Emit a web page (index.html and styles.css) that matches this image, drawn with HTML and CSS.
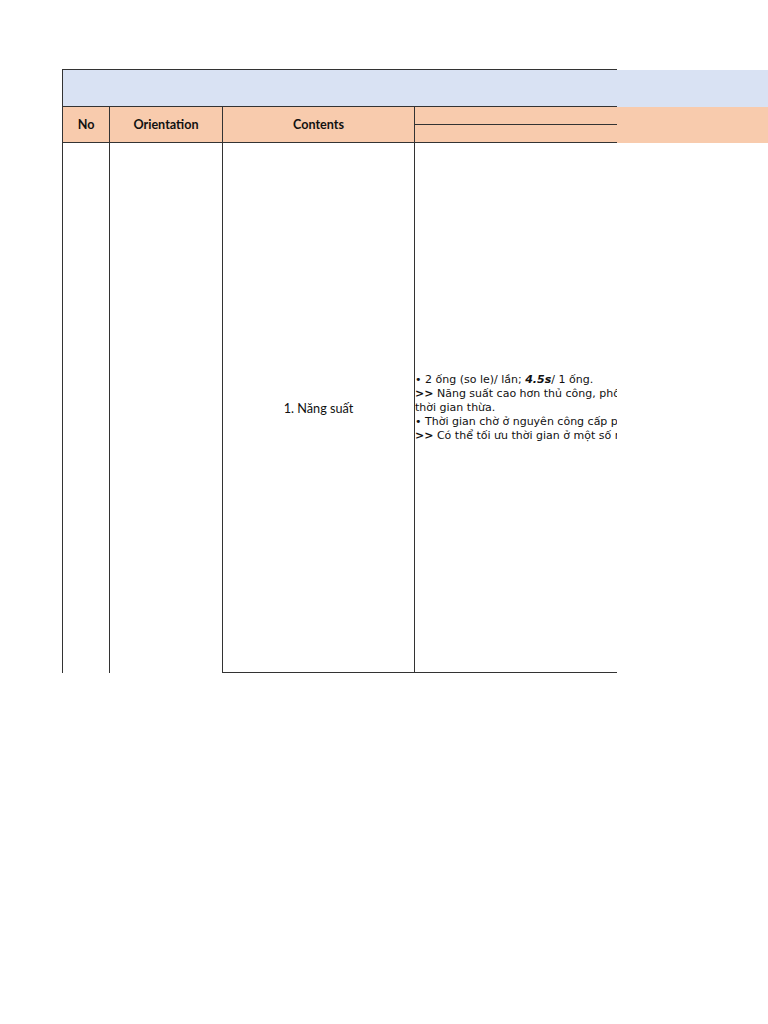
FILE: index.html
```html
<!DOCTYPE html>
<html lang="vi">
<head>
<meta charset="utf-8">
<title>Sheet</title>
<link rel="stylesheet" href="styles.css">
</head>
<body>
<table class="sheet">
  <colgroup>
    <col class="c-no">
    <col class="c-ori">
    <col class="c-con">
    <col class="c-desc">
    <col class="c-rest">
  </colgroup>
  <tr class="title">
    <td class="title-cell" colspan="4"></td>
    <td class="title-rest"></td>
  </tr>
  <tr class="head head-a">
    <th class="h" rowspan="2">No</th>
    <th class="h" rowspan="2">Orientation</th>
    <th class="h" rowspan="2">Contents</th>
    <th class="h sub"></th>
    <th class="head-rest" rowspan="2"></th>
  </tr>
  <tr class="head head-b">
    <th class="h sub"></th>
  </tr>
  <tr class="body">
    <td class="b open"></td>
    <td class="b open"></td>
    <td class="b content">1. Năng suất</td>
    <td class="b desc">
      <div class="clip">
        <div class="ln">• 2 ống (so le)/ lần; <b><i>4.5s</i></b>/ 1 ống.</div>
        <div class="ln"><b>&gt;&gt;</b> Năng suất cao hơn thủ công, phối hợp tốt, không có</div>
        <div class="ln">thời gian thừa.</div>
        <div class="ln">• Thời gian chờ ở nguyên công cấp phôi còn dài.</div>
        <div class="ln"><b>&gt;&gt;</b> Có thể tối ưu thời gian ở một số nguyên công.</div>
      </div>
    </td>
    <td class="body-rest"></td>
  </tr>
</table>
</body>
</html>
```

FILE: styles.css
```css
html, body {
  margin: 0;
  padding: 0;
  background: #ffffff;
}
body {
  padding: 69px 0 0 62px;
  font-family: "DejaVu Sans", sans-serif;
  color: #111;
}
.sheet {
  border-collapse: collapse;
  table-layout: fixed;
  width: 706px;
}
.c-no { width: 47px; }
.c-ori { width: 113px; }
.c-con { width: 192px; }
.c-desc { width: 202px; }
.c-rest { width: 152px; }

.sheet td, .sheet th {
  padding: 0;
}

.title td { height: 36px; background: #d9e2f3; }
.title-cell {
  border-top: 1px solid #333;
  border-left: 1px solid #333;
  border-bottom: 1px solid #333;
}

.head th {
  background: #f8cbad;
  font-family: Lato, "DejaVu Sans", sans-serif;
  font-weight: 700;
  font-size: 12.6px;
  color: #111;
  text-align: center;
}
.head-a th.sub { height: 17px; }
.head-b th.sub { height: 17px; }
.h {
  border: 1px solid #333;
}
.sub {
  border-right: none !important;
}
.head-rest { border: none; }

.body td { height: 529px; }
.b.open {
  border-left: 1px solid #333;
  border-right: 1px solid #333;
  border-bottom: none;
}
.content {
  border: 1px solid #333;
  text-align: center;
  vertical-align: middle;
  font-family: Lato, "DejaVu Sans", sans-serif;
  font-size: 12.7px;
}
.desc {
  border-top: 1px solid #333;
  border-left: 1px solid #333;
  border-bottom: 1px solid #333;
  vertical-align: middle;
  font-size: 11px;
  line-height: 14px;
}
.clip {
  overflow: hidden;
  width: 202px;
}
.ln {
  white-space: nowrap;
}
.ln b { font-weight: 700; }
.body-rest { border: none; background: #fff; }
```
